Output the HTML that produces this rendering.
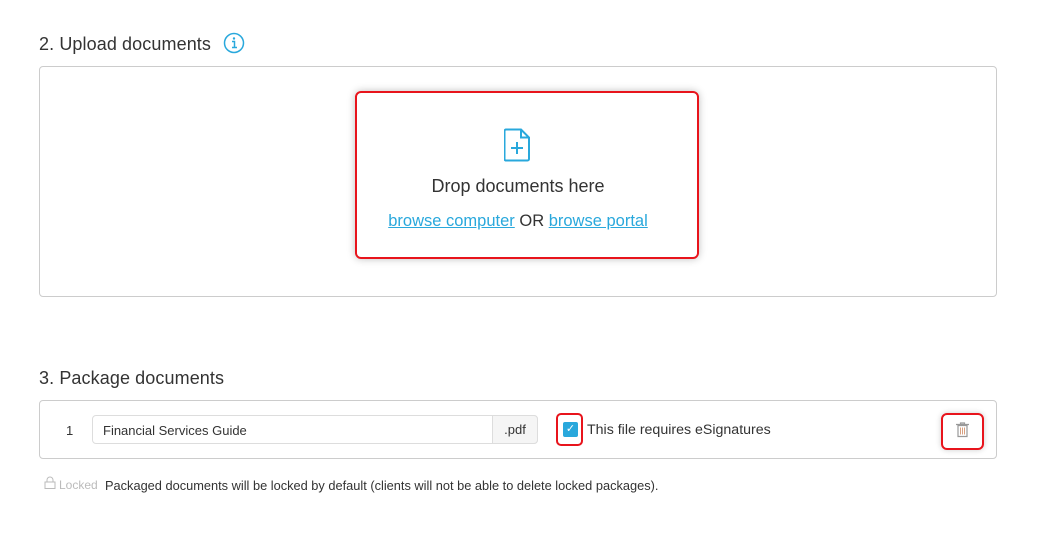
<!DOCTYPE html>
<html><head><style>
body{margin:0;width:1038px;height:544px;background:#fff;font-family:"Liberation Sans",sans-serif;color:#333;position:relative;overflow:hidden}
.a{position:absolute}
.h{font-size:18px;color:#333;letter-spacing:0.1px}
a{color:#29a8dc;text-decoration:underline}
</style></head><body>
<div class="a h" style="left:39px;top:34px">2. Upload documents</div>
<svg class="a" style="left:223px;top:32px" width="22" height="22" viewBox="0 0 22 22"><circle cx="11" cy="11" r="9.5" fill="none" stroke="#29a8dc" stroke-width="1.5"/><circle cx="11" cy="6.5" r="1.2" fill="#29a8dc"/><path d="M9 9.5h2.5v6M9 15.5h5" stroke="#29a8dc" stroke-width="1.5" fill="none"/></svg>
<div class="a" style="left:39px;top:66px;width:956px;height:229px;border:1px solid #ccc;border-radius:4px"></div>
<div class="a" style="left:355px;top:91px;width:340px;height:164px;border:2px solid #e8141c;border-radius:6px;box-shadow:0 0 8px rgba(0,0,0,.25)"></div>
<svg class="a" style="left:504px;top:128px" width="28" height="34" viewBox="0 0 28 34"><path d="M2 1.5h15l8 8V31a1.5 1.5 0 0 1-1.5 1.5h-22A1.5 1.5 0 0 1 .5 31V3A1.5 1.5 0 0 1 2 1.5zM17 1.5v8h8" fill="none" stroke="#29a8dc" stroke-width="2"/><path d="M13 14v12M7 20h12" stroke="#29a8dc" stroke-width="2"/></svg>
<div class="a" style="left:318px;top:176px;width:400px;text-align:center;font-size:18px;color:#333">Drop documents here</div>
<div class="a" style="left:318px;top:212px;width:400px;text-align:center;font-size:16.5px;color:#333"><a>browse computer</a> OR <a>browse portal</a></div>
<div class="a h" style="left:39px;top:368px">3. Package documents</div>
<div class="a" style="left:39px;top:400px;width:956px;height:57px;border:1px solid #ccc;border-radius:4px"></div>
<div class="a" style="left:66px;top:423px;font-size:13px">1</div>
<div class="a" style="left:92px;top:415px;width:444px;height:27px;border:1px solid #ddd;border-radius:4px"></div>
<div class="a" style="left:492px;top:415px;width:44px;height:27px;background:#f5f5f5;border-radius:0 4px 4px 0;border:1px solid #ddd;font-size:13px;line-height:27px;text-align:center">.pdf</div>
<div class="a" style="left:103px;top:423px;font-size:13px">Financial Services Guide</div>
<div class="a" style="left:556px;top:413px;width:27px;height:33px;border:2px solid #e8141c;border-radius:5px;box-sizing:border-box"></div>
<div class="a" style="left:563px;top:422px;width:15px;height:15px;background:#29a8dc;border-radius:2px;color:#fff;font-size:11px;line-height:15px;text-align:center">✓</div>
<div class="a" style="left:587px;top:422px;font-size:14.2px">This file requires eSignatures</div>
<div class="a" style="left:941px;top:413px;width:43px;height:37px;border:2px solid #e8141c;border-radius:6px;box-sizing:border-box;box-shadow:0 0 6px rgba(0,0,0,.2)"></div>
<svg class="a" style="left:956px;top:422px" width="13" height="16" viewBox="0 0 13 16"><path d="M0 2.5h13M4.5 2.5V1h4v1.5M2 3.5h9v11H2z" fill="none" stroke="#999" stroke-width="1.2"/><path d="M4.5 5.5v7M6.5 5.5v7M8.5 5.5v7" stroke="#d8a080" stroke-width="1"/></svg>
<svg class="a" style="left:44px;top:476px" width="12" height="13" viewBox="0 0 12 13"><path d="M3 6V4a3 3 0 0 1 6 0v2M1 6h10v6.5H1z" fill="none" stroke="#bbb" stroke-width="1"/></svg>
<div class="a" style="left:59px;top:478px;font-size:12px;color:#bbb">Locked</div>
<div class="a" style="left:105px;top:478px;font-size:12.8px;color:#333">Packaged documents will be locked by default (clients will not be able to delete locked packages).</div>
</body></html>
